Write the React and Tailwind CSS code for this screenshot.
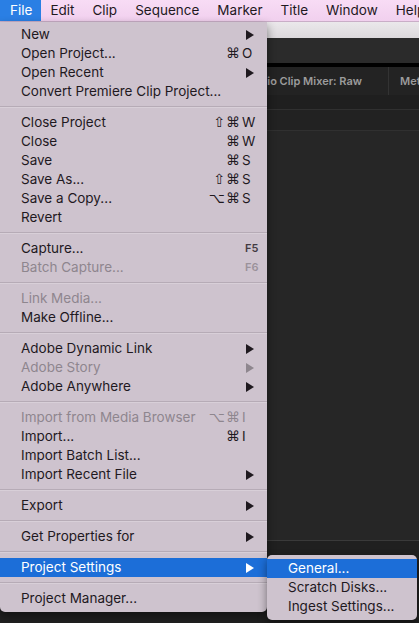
import React from "react";

const font = { fontFamily: 'Inter, "Liberation Sans", "DejaVu Sans", sans-serif' };

const menuBar = ["File", "Edit", "Clip", "Sequence", "Marker", "Title", "Window", "Help"];

const items = [
  { label: "New", arrow: true },
  { label: "Open Project...", mods: "⌘", key: "O" },
  { label: "Open Recent", arrow: true },
  { label: "Convert Premiere Clip Project..." },
  "sep",
  { label: "Close Project", mods: "⇧⌘", key: "W" },
  { label: "Close", mods: "⌘", key: "W" },
  { label: "Save", mods: "⌘", key: "S" },
  { label: "Save As...", mods: "⇧⌘", key: "S" },
  { label: "Save a Copy...", mods: "⌥⌘", key: "S" },
  { label: "Revert" },
  "sep",
  { label: "Capture...", fkey: "F5" },
  { label: "Batch Capture...", fkey: "F6", disabled: true },
  "sep",
  { label: "Link Media...", disabled: true },
  { label: "Make Offline..." },
  "sep",
  { label: "Adobe Dynamic Link", arrow: true },
  { label: "Adobe Story", arrow: true, disabled: true },
  { label: "Adobe Anywhere", arrow: true },
  "sep",
  { label: "Import from Media Browser", mods: "⌥⌘", key: "I", disabled: true },
  { label: "Import...", mods: "⌘", key: "I" },
  { label: "Import Batch List..." },
  { label: "Import Recent File", arrow: true },
  "sep",
  { label: "Export", arrow: true },
  "sep",
  { label: "Get Properties for", arrow: true },
  "sep",
  { label: "Project Settings", arrow: true, active: true },
  "sep",
  { label: "Project Manager..." },
];

function Arrow({ className }) {
  return (
    <svg width="8" height="10" viewBox="0 0 8 10" className={className}>
      <path d="M0 0 L8 5 L0 10 Z" fill="currentColor" />
    </svg>
  );
}

function Row({ item }) {
  const color = item.active
    ? "bg-[#1c6ed8] text-white"
    : item.disabled
    ? "text-[#8e868e]"
    : "text-[#1f191f]";
  return (
    <div className={`flex items-center h-[19px] pl-[21px] pr-[7px] text-[13.5px] ${color}`}>
      <span className="flex-1 whitespace-nowrap">{item.label}</span>
      <div className="w-[60px] shrink-0 flex items-center">
        {item.mods && (
          <>
            <span className="w-[41px] text-right text-[14px] tracking-[1px]" style={{ fontFamily: '"DejaVu Sans", sans-serif' }}>
              {item.mods}
            </span>
            <span className="pl-[1px] text-[13.5px]">{item.key}</span>
          </>
        )}
        {item.fkey && (
          <span className="pl-[45px] text-[11px] font-semibold opacity-80">{item.fkey}</span>
        )}
        {item.arrow && <Arrow className="ml-[46px]" />}
      </div>
    </div>
  );
}

function Separator() {
  return (
    <div className="h-[12px] flex flex-col justify-center">
      <div className="h-[1px] bg-[#b6abb6]" />
      <div className="h-[1px] bg-[#d8cfd8]" />
    </div>
  );
}

export default function App() {
  return (
    <div className="relative w-[419px] h-[623px] overflow-hidden bg-[#1f1f1f] flex flex-col" style={font}>
      {/* menu bar */}
      <div className="h-[22px] flex items-center bg-gradient-to-b from-[#f8dcf5] to-[#f1d0ee] border-b border-[#c9aec7] text-[13.5px] text-[#1f191f] whitespace-nowrap shrink-0">
        {menuBar.map((m, i) => (
          <div
            key={m}
            className={`h-full shrink-0 flex items-center px-[9px] ${i === 0 ? "bg-[#2a7fe4] text-white pl-[10px]" : ""}`}
          >
            {m}
          </div>
        ))}
      </div>

      {/* app behind */}
      <div className="h-[16px] bg-gradient-to-b from-[#ebe8eb] to-[#dcd9dc] shrink-0" />
      <div className="h-[25px] bg-[#2b2b2b] shrink-0" />
      <div className="h-[4px] bg-black shrink-0" />
      <div className="h-[28px] bg-[#232323] flex items-center text-[11px] font-semibold text-[#9c9c9c] shrink-0 whitespace-nowrap">
        <div className="w-[388px] shrink-0 flex justify-end pr-[26px]">Audio Clip Mixer: Raw</div>
        <div className="h-full w-[1px] shrink-0 bg-[#333]" />
        <div className="pl-[11px]">Metadata</div>
      </div>
      <div className="h-[14px] bg-[#1f1f1f] shrink-0" />
      <div className="h-[1px] bg-[#303030] shrink-0" />
      <div className="h-[20px] bg-[#222] shrink-0" />
      <div className="h-[1px] bg-[#303030] shrink-0" />
      <div className="h-[409px] bg-[#262626] shrink-0" />
      <div className="h-[1px] bg-[#3a3a3a] shrink-0" />
      <div className="flex-1 bg-[#202020]" />

      {/* File menu */}
      <div className="absolute left-0 top-[22px] w-[267px] pt-[3px] pb-[4px] bg-[#cec3ce] rounded-b-[5px] shadow-[0_4px_10px_rgba(0,0,0,0.45)]">
        {items.map((it, i) => (it === "sep" ? <Separator key={i} /> : <Row key={i} item={it} />))}
      </div>

      {/* Project Settings submenu */}
      <div className="absolute left-[267px] top-[555px] w-[150px] py-[4px] bg-[#cec3ce] rounded-[5px] shadow-[0_4px_10px_rgba(0,0,0,0.45)] text-[13.5px] text-[#1f191f]">
        <div className="h-[19px] flex items-center pl-[21px] bg-[#1c6ed8] text-white">General...</div>
        <div className="h-[19px] flex items-center pl-[21px]">Scratch Disks...</div>
        <div className="h-[19px] flex items-center pl-[21px]">Ingest Settings...</div>
      </div>
    </div>
  );
}
